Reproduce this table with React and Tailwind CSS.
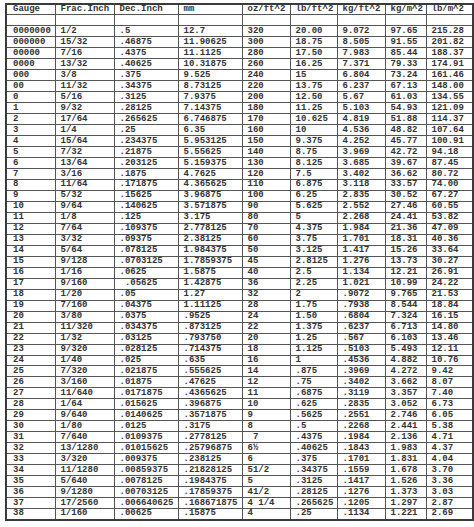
import React from 'react'

const head = ['Gauge', 'Frac.Inch', 'Dec.Inch', 'mm', 'oz/ft^2', 'lb/ft^2', 'kg/ft^2', 'kg/m^2', 'lb/m^2']

const rows = [
  ['', '', '', '', '', '', '', '', ''],
  ['0000000', '1/2', '.5', '12.7', '320', '20.00', '9.072', '97.65', '215.28'],
  ['000000', '15/32', '.46875', '11.90625', '300', '18.75', '8.505', '91.55', '201.82'],
  ['00000', '7/16', '.4375', '11.1125', '280', '17.50', '7.983', '85.44', '188.37'],
  ['0000', '13/32', '.40625', '10.31875', '260', '16.25', '7.371', '79.33', '174.91'],
  ['000', '3/8', '.375', '9.525', '240', '15', '6.804', '73.24', '161.46'],
  ['00', '11/32', '.34375', '8.73125', '220', '13.75', '6.237', '67.13', '148.00'],
  ['0', '5/16', '.3125', '7.9375', '200', '12.50', '5.67', '61.03', '134.55'],
  ['1', '9/32', '.28125', '7.14375', '180', '11.25', '5.103', '54.93', '121.09'],
  ['2', '17/64', '.265625', '6.746875', '170', '10.625', '4.819', '51.88', '114.37'],
  ['3', '1/4', '.25', '6.35', '160', '10', '4.536', '48.82', '107.64'],
  ['4', '15/64', '.234375', '5.953125', '150', '9.375', '4.252', '45.77', '100.91'],
  ['5', '7/32', '.21875', '5.55625', '140', '8.75', '3.969', '42.72', '94.18'],
  ['6', '13/64', '.203125', '5.159375', '130', '8.125', '3.685', '39.67', '87.45'],
  ['7', '3/16', '.1875', '4.7625', '120', '7.5', '3.402', '36.62', '80.72'],
  ['8', '11/64', '.171875', '4.365625', '110', '6.875', '3.118', '33.57', '74.00'],
  ['9', '5/32', '.15625', '3.96875', '100', '6.25', '2.835', '30.52', '67.27'],
  ['10', '9/64', '.140625', '3.571875', '90', '5.625', '2.552', '27.46', '60.55'],
  ['11', '1/8', '.125', '3.175', '80', '5', '2.268', '24.41', '53.82'],
  ['12', '7/64', '.109375', '2.778125', '70', '4.375', '1.984', '21.36', '47.09'],
  ['13', '3/32', '.09375', '2.38125', '60', '3.75', '1.701', '18.31', '40.36'],
  ['14', '5/64', '.078125', '1.984375', '50', '3.125', '1.417', '15.26', '33.64'],
  ['15', '9/128', '.0703125', '1.7859375', '45', '2.8125', '1.276', '13.73', '30.27'],
  ['16', '1/16', '.0625', '1.5875', '40', '2.5', '1.134', '12.21', '26.91'],
  ['17', '9/160', ' .05625', '1.42875', '36', '2.25', '1.021', '10.99', '24.22'],
  ['18', '1/20', '.05', '1.27', '32', '2', '.9072', '9.765', '21.53'],
  ['19', '7/160', '.04375', '1.11125', '28', '1.75', '.7938', '8.544', '18.84'],
  ['20', '3/80', '.0375', '.9525', '24', '1.50', '.6804', '7.324', '16.15'],
  ['21', '11/320', '.034375', '.873125', '22', '1.375', '.6237', '6.713', '14.80'],
  ['22', '1/32', '.03125', '.793750', '20', '1.25', '.567', '6.103', '13.46'],
  ['23', '9/320', '.028125', '.714375', '18', '1.125', '.5103', '5.493', '12.11'],
  ['24', '1/40', '.025', '.635', '16', '1', '.4536', '4.882', '10.76'],
  ['25', '7/320', '.021875', '.555625', '14', '.875', '.3969', '4.272', '9.42'],
  ['26', '3/160', '.01875', '.47625', '12', '.75', '.3402', '3.662', '8.07'],
  ['27', '11/640', '.0171875', '.4365625', '11', '.6875', '.3119', '3.357', '7.40'],
  ['28', '1/64', '.015625', '.396875', '10', '.625', '.2835', '3.052', '6.73'],
  ['29', '9/640', '.0140625', '.3571875', '9', '.5625', '.2551', '2.746', '6.05'],
  ['30', '1/80', '.0125', '.3175', '8', '.5', '.2268', '2.441', '5.38'],
  ['31', '7/640', '.0109375', '.2778125', ' 7', '.4375', '.1984', '2.136', '4.71'],
  ['32', '13/1280', '.01015625', '.25796875', '6½', '.40625', '.1843', '1.983', '4.37'],
  ['33', '3/320', '.009375', '.238125', '6', '.375', '.1701', '1.831', '4.04'],
  ['34', '11/1280', '.00859375', '.21828125', '51/2', '.34375', '.1559', '1.678', '3.70'],
  ['35', '5/640', '.0078125', '.1984375', '5', '.3125', '.1417', '1.526', '3.36'],
  ['36', '9/1280', '.00703125', '.17859375', '41/2', '.28125', '.1276', '1.373', '3.03'],
  ['37', '17/2560', '.006640625', '.168671875', '4 1/4', '.265625', '.1205', '1.297', '2.87'],
  ['38', '1/160', '.00625', '.15875', '4', '.25', '.1134', '1.221', '2.69'],
]

const widths = ['w-[49px]', 'w-[59px]', 'w-[64px]', 'w-[64px]', 'w-[48px]', 'w-[47px]', 'w-[48px]', 'w-[41px]', 'w-[47px]']

const Cell = ({ children, first }) => (
  <td className={`border border-[#555] p-0 leading-[9px] whitespace-pre overflow-hidden ${first ? 'pl-[6px]' : 'pl-[5px]'}`}>
    {children}
  </td>
)

export default function App() {
  return (
    <div className="bg-white w-[474px] h-[527px] pt-[3px] pl-[5px]">
      <table className="table-fixed border-collapse border-2 border-[#3a3a3a] w-[467px] text-[9px] font-bold text-[#333] font-['Liberation_Mono','Courier_New',monospace]">
        <colgroup>
          {widths.map((w, i) => <col key={i} className={w} />)}
        </colgroup>
        <tbody>
          <tr className="h-[10.98px]">
            {head.map((h, i) => <Cell key={i} first={i === 0}>{h}</Cell>)}
          </tr>
          {rows.map((r, i) => (
            <tr key={i} className="h-[10.98px]">
              {r.map((c, j) => <Cell key={j} first={j === 0}>{c}</Cell>)}
            </tr>
          ))}
        </tbody>
      </table>
    </div>
  )
}
